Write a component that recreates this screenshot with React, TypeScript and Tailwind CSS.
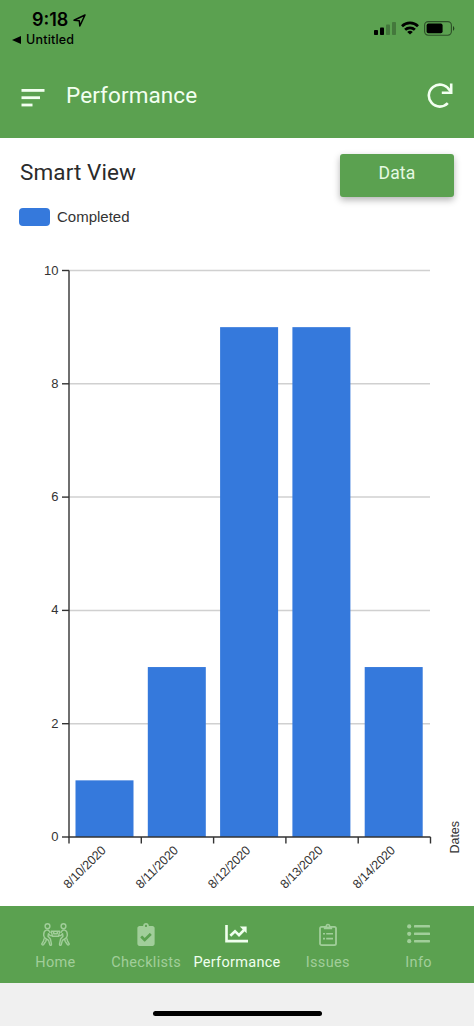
import React, { useState } from 'react';
import { FaClipboardCheck } from 'react-icons/fa';

interface DayCount {
  date: string;
  completed: number;
}

interface NavItem {
  label: string;
  icon: React.ReactNode;
}

const DATA: DayCount[] = [
  { date: '8/10/2020', completed: 1 },
  { date: '8/11/2020', completed: 3 },
  { date: '8/12/2020', completed: 9 },
  { date: '8/13/2020', completed: 9 },
  { date: '8/14/2020', completed: 3 },
];

const TICKS = [0, 2, 4, 6, 8, 10];

// Plot area inside the chart svg
const LEFT = 69;
const RIGHT = 430.5;
const TOP = 30.5;
const BOTTOM = 597;
const STEP = (RIGHT - LEFT) / DATA.length;
const BAR_WIDTH = 58;

const yFor = (value: number) => BOTTOM - (value / 10) * (BOTTOM - TOP);

function StatusBar() {
  return (
    <div className="flex h-[52px] justify-between pl-3 pr-[19px] text-black">
      <div className="pt-[9px]">
        <div className="flex items-center gap-[5px] pl-5">
          <span className="font-['Inter'] text-[18px] font-semibold leading-[22px]">9:18</span>
          <svg width="13" height="13" viewBox="0 0 13 13" fill="none" stroke="currentColor" strokeWidth="1.5" strokeLinejoin="round">
            <path d="M12 1 1 6.2 6.3 6.7 6.8 12Z" />
          </svg>
        </div>
        <div className="flex items-center gap-[5px]">
          <svg width="9" height="8" viewBox="0 0 9 8" fill="currentColor">
            <path d="M0 4 9 0V8Z" />
          </svg>
          <span className="font-['Inter'] text-[12.5px] font-medium leading-[17px] tracking-[0.2px]">Untitled</span>
        </div>
      </div>
      <div className="flex items-start gap-[5px] pt-[21px]">
        <svg width="22" height="14" viewBox="0 0 22 14" fill="currentColor">
          <rect x="0" y="9" width="4" height="5" rx="0.8" />
          <rect x="6" y="6.5" width="4" height="7.5" rx="0.8" />
          <rect x="12" y="3.5" width="4" height="10.5" rx="0.8" opacity="0.25" />
          <rect x="18" y="1" width="4" height="13" rx="0.8" opacity="0.25" />
        </svg>
        <svg width="18" height="14" viewBox="0 0 18 14" fill="none" stroke="currentColor" strokeWidth="2.7">
          <path d="M1 5.2a11.4 11.4 0 0 1 16 0" />
          <path d="M4.1 8.8a7 7 0 0 1 9.8 0" />
          <path d="M9 13.6 6.2 11a4 4 0 0 1 5.6 0Z" fill="currentColor" stroke="none" />
        </svg>
        <svg width="31" height="15" viewBox="0 0 31 15">
          <rect x="0.6" y="0.6" width="26.8" height="13.6" rx="3.6" fill="none" stroke="#000" strokeOpacity="0.5" strokeWidth="1.1" />
          <rect x="2.6" y="2.6" width="16" height="9.6" rx="1.8" fill="#000" />
          <path d="M29 5v4.8q1.3-.8 1.3-2.4T29 5Z" fill="#000" fillOpacity="0.6" />
        </svg>
      </div>
    </div>
  );
}

function Header() {
  return (
    <header className="h-[137.5px] shrink-0 bg-[#5ba150]">
      <StatusBar />
      <div className="flex h-[88px] items-center pl-[21px] pr-[21px] text-[#f2fff0]">
        <button aria-label="Menu" className="pt-[3px]">
          <svg width="24" height="18" viewBox="0 0 24 18" fill="currentColor">
            <rect x="0.5" y="0" width="23" height="2.8" />
            <rect x="0.5" y="7.3" width="18.5" height="2.8" />
            <rect x="0.5" y="14.6" width="11" height="2.8" />
          </svg>
        </button>
        <h1 className="ml-[21px] flex-1 font-['Roboto'] text-[22.5px] tracking-[0.1px]">Performance</h1>
        <button aria-label="Refresh">
          <svg width="26" height="26" viewBox="0 0 26 26" fill="none" stroke="currentColor" strokeWidth="2.6">
            <path d="M20.8 20.2A11 11 0 1 1 22 6.5L24 8.6" />
            <path d="M24.2 0.5V9.7H14.8" />
          </svg>
        </button>
      </div>
    </header>
  );
}

function CompletedChart() {
  return (
    <svg width="474" height="666" viewBox="0 0 474 666" className="block font-['Liberation_Sans']" fill="#333">
      {TICKS.map(tick => (
        <g key={tick}>
          {tick > 0 && <path d={`M${LEFT} ${yFor(tick)}H430`} stroke="#d0d0d0" strokeWidth="1.5" />}
          <path d={`M${LEFT - 7} ${yFor(tick)}H${LEFT}`} stroke="#333" strokeWidth="1.4" />
          <text x="58.5" y={yFor(tick) + 4} textAnchor="end" fontSize="13">{tick}</text>
        </g>
      ))}

      {DATA.map((day, i) => (
        <rect
          key={day.date}
          x={LEFT + i * STEP + 6.5}
          y={yFor(day.completed)}
          width={BAR_WIDTH}
          height={BOTTOM - yFor(day.completed)}
          fill="#3579dc"
        />
      ))}

      <path d={`M${LEFT} ${TOP}V${BOTTOM}H${RIGHT}`} fill="none" stroke="#333" strokeWidth="1.4" />
      {[...DATA, null].map((_, i) => (
        <path key={i} d={`M${LEFT + i * STEP} ${BOTTOM}v6.5`} stroke="#333" strokeWidth="1.4" />
      ))}

      {DATA.map((day, i) => {
        const x = LEFT + (i + 0.5) * STEP + 1.5;
        return (
          <text
            key={day.date}
            x={x}
            y="611"
            textAnchor="end"
            fontSize="12.5"
            textLength="54"
            transform={`rotate(-45 ${x} 611)`}
          >
            {day.date}
          </text>
        );
      })}
      <text x="459" y="613.5" fontSize="12.5" textLength="32.5" transform="rotate(-90 459 613.5)">Dates</text>
    </svg>
  );
}

function CarryIcon() {
  return (
    <svg width="29" height="23" viewBox="0 0 29 23" fill="none" stroke="currentColor" strokeWidth="1.4" strokeLinejoin="round">
      <circle cx="6.5" cy="3.2" r="2.4" />
      <circle cx="22.5" cy="3.2" r="2.4" />
      <path d="M10.3 8.3h8.4l-1.2 5h-6Z" />
      <path d="M12.7 8.3v2.4h3.6V8.3" />
      <path d="M5.2 7.2c-1.8.6-2.7 3-2.4 5.6.1 1.3.8 2.1 2 2.8l2.8 1.8 1.2 4.4c.7.9 1.7.6 1.7-.6L9.4 16 7 13.3l.4-2.5 1.8 1.8 2.6.1M5.2 7.2c1.6-.6 2.6-.1 3.3 1.4l.8 1.4M3.2 15.4l-.7 2.4-1.7 3c-.1 1.2 1.2 1.5 1.8.7l2.2-3.2.6-2" />
      <path d="M23.8 7.2c1.8.6 2.7 3 2.4 5.6-.1 1.3-.8 2.1-2 2.8l-2.8 1.8-1.2 4.4c-.7.9-1.7.6-1.7-.6l1.1-5.2 2.4-2.7-.4-2.5-1.8 1.8-2.6.1M23.8 7.2c-1.6-.6-2.6-.1-3.3 1.4l-.8 1.4M25.8 15.4l.7 2.4 1.7 3c.1 1.2-1.2 1.5-1.8.7l-2.2-3.2-.6-2" />
    </svg>
  );
}

const NAV_ITEMS: NavItem[] = [
  { label: 'Home', icon: <CarryIcon /> },
  { label: 'Checklists', icon: <FaClipboardCheck className="h-[23px] w-[18px]" /> },
  {
    label: 'Performance',
    icon: (
      <svg width="23" height="18" viewBox="0 0 23 18" fill="none" stroke="currentColor" strokeWidth="2.6">
        <path d="M1.5 0v16.1H23" />
        <path d="M5.3 10.7 10 6.2l4 4 5-5.2" />
        <path d="M14.8 1.4H21.6V8.2Z" fill="currentColor" stroke="none" />
      </svg>
    ),
  },
  {
    label: 'Issues',
    icon: (
      <svg width="18" height="23" viewBox="0 0 18 23" fill="none" stroke="currentColor" strokeWidth="1.8">
        <rect x="1" y="3.8" width="16" height="18.3" rx="1.6" />
        <path d="M4.8 3.2h1.7a2.5 2.5 0 0 1 5 0h1.7v3H4.8Z" fill="currentColor" stroke="none" />
        <circle cx="9" cy="3" r="0.8" fill="#5ba150" stroke="none" />
        <path d="M4 10.8h2M7.2 10.8h6.8M4 15.6h2M7.2 15.6h6.8" strokeWidth="1.6" />
      </svg>
    ),
  },
  {
    label: 'Info',
    icon: (
      <svg width="23" height="20" viewBox="0 0 23 20" fill="currentColor">
        <circle cx="2.2" cy="2.4" r="2.1" />
        <circle cx="2.2" cy="9.8" r="2.1" />
        <circle cx="2.2" cy="17.2" r="2.1" />
        <rect x="7" y="1.1" width="16" height="2.5" rx="0.6" />
        <rect x="7" y="8.5" width="16" height="2.5" rx="0.6" />
        <rect x="7" y="15.9" width="16" height="2.5" rx="0.6" />
      </svg>
    ),
  },
];

function BottomNav() {
  const [active, setActive] = useState('Performance');

  return (
    <nav className="grid h-[77px] shrink-0 grid-cols-5 bg-[#5ba150] px-[10px]">
      {NAV_ITEMS.map(item => (
        <button
          key={item.label}
          onClick={() => setActive(item.label)}
          className={`flex flex-col items-center pt-4 font-['Roboto'] text-[14.5px] tracking-[0.3px] ${
            item.label === active ? 'text-[#f0ffee]' : 'text-[#a1ce9a]'
          }`}
        >
          <span className="flex h-6 items-center">{item.icon}</span>
          <span className="mt-[7px] leading-5">{item.label}</span>
        </button>
      ))}
    </nav>
  );
}

export default function App() {
  return (
    <div className="flex h-[1026px] w-[474px] flex-col overflow-hidden bg-white">
      <Header />
      <main className="flex-1">
        <div className="flex h-[59px] items-start justify-between pl-5 pr-5 pt-4">
          <h2 className="mt-[2px] font-['Roboto'] text-[22.5px] leading-8 tracking-[0.1px] text-[#2b2b2b]">Smart View</h2>
          <button className="h-[43px] w-[114px] rounded-[3px] bg-[#5ba150] pb-[3px] font-['Roboto'] text-[17.5px] tracking-[0.2px] text-[#e5f9e2] shadow-[0_3px_7px_rgba(0,0,0,0.3)]">
            Data
          </button>
        </div>
        <div className="flex h-[43.5px] items-center gap-[7px] pl-[19px] pb-[3px]">
          <span className="mt-[1px] h-[18px] w-[31px] rounded-[4px] bg-[#3579dc]" />
          <span className="font-['Liberation_Sans'] text-[15px] text-[#333]">Completed</span>
        </div>
        <CompletedChart />
      </main>
      <BottomNav />
      <div className="flex h-[43px] shrink-0 justify-center bg-[#f0f0f0] pt-7">
        <div className="h-[5px] w-[169px] rounded-full bg-black" />
      </div>
    </div>
  );
}
